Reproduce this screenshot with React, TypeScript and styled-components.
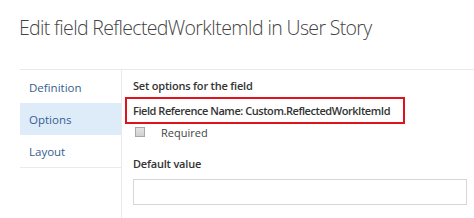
import styled, { createGlobalStyle } from "styled-components";

const GlobalStyle = createGlobalStyle`
  html, body {
    margin: 0;
    padding: 0;
    background: #fff;
  }
  body {
    font-family: "Open Sans", "Noto Sans", "Liberation Sans", sans-serif;
    color: #333;
  }
`;

const Page = styled.div`
  width: 474px;
  height: 218px;
  overflow: hidden;
  padding: 14px 0 0 20px;
  box-sizing: border-box;
`;

const Title = styled.h1`
  margin: 0 0 0 -1px;
  font-size: 19.5px;
  font-weight: 300;
  color: #444;
  line-height: 28px;
  letter-spacing: -0.65px;
  white-space: nowrap;
`;

const Body = styled.div`
  margin-top: 27px;
  display: flex;
  border-top: 1px solid #eaeaea;
  height: 200px;
`;

const Nav = styled.nav`
  width: 101px;
  flex-shrink: 0;
  align-self: flex-start;
  padding-top: 1px;
  border-bottom: 1px solid #eaeaea;
`;

const NavItem = styled.div<{ $active?: boolean }>`
  height: 32px;
  display: flex;
  align-items: center;
  padding-left: 9px;
  font-size: 11.5px;
  color: #35608f;
  background: ${(p) => (p.$active ? "#deecf9" : "transparent")};
`;

const Content = styled.section`
  flex: 1;
  border-left: 1px solid #eaeaea;
  padding: 9px 7px 0 3px;
  display: flex;
  flex-direction: column;
`;

const Heading = styled.div`
  padding-left: 8px;
  font-size: 11px;
  font-weight: 600;
  color: #333;
  line-height: 14px;
  letter-spacing: -0.2px;
`;

const Highlight = styled.div`
  margin-top: 4px;
  width: 280px;
  height: 27px;
  box-sizing: border-box;
  border: 2.5px solid #e0121e;
  display: flex;
  align-items: center;
  padding-left: 6px;
  font-size: 11px;
  font-weight: 600;
  color: #333;
  letter-spacing: -0.45px;
  white-space: nowrap;
`;

const CheckRow = styled.label`
  display: flex;
  align-items: center;
  gap: 16px;
  padding-left: 10px;
  height: 16px;
  font-size: 11px;
  color: #444;
`;

const Box = styled.span`
  width: 8px;
  height: 8px;
  border: 1px solid #a8a8a8;
  background: linear-gradient(#e4e4e4, #d0d0d0);
`;

const Label = styled.div`
  margin-top: 17px;
  padding-left: 8px;
  font-size: 11px;
  font-weight: 600;
  color: #333;
  line-height: 14px;
  letter-spacing: -0.2px;
`;

const Input = styled.div`
  margin: 8px 0 0 8px;
  height: 26px;
  box-sizing: border-box;
  border: 1px solid #d6d6d6;
  background: #fff;
`;

export default function App() {
  return (
    <>
      <GlobalStyle />
      <Page>
        <Title>Edit field ReflectedWorkItemId in User Story</Title>
        <Body>
          <Nav>
            <NavItem>Definition</NavItem>
            <NavItem $active>Options</NavItem>
            <NavItem>Layout</NavItem>
          </Nav>
          <Content>
            <Heading>Set options for the field</Heading>
            <Highlight>Field Reference Name: Custom.ReflectedWorkItemId</Highlight>
            <CheckRow>
              <Box />
              Required
            </CheckRow>
            <Label>Default value</Label>
            <Input />
          </Content>
        </Body>
      </Page>
    </>
  );
}
